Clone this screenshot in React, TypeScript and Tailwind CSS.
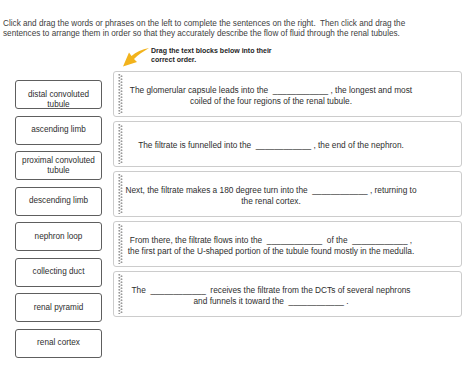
import React from "react";

const B = "____________";

function Handle() {
  return (
    <svg width="5" height="40" className="shrink-0" aria-hidden>
      <defs>
        <pattern id="hp" width="5" height="3" patternUnits="userSpaceOnUse">
          <circle cx="1.3" cy="0.8" r="0.95" fill="#9a9a9a" />
          <circle cx="3.5" cy="2.3" r="0.95" fill="#9a9a9a" />
        </pattern>
      </defs>
      <rect x="0" y="0" width="5" height="40" fill="url(#hp)" />
    </svg>
  );
}

function WordBox({ children, extra = "" }: { children: React.ReactNode; extra?: string }) {
  return (
    <div
      className={`h-[29px] w-[87px] border border-[#5e5e5e] rounded-[3px] flex items-center justify-center text-center text-[8.2px] leading-[9.5px] text-[#2e2e2e] ${extra}`}
    >
      <div>{children}</div>
    </div>
  );
}

function SentenceBox({ lines }: { lines: string[] }) {
  return (
    <div className="h-[46px] w-[349px] border border-[#cccccc] rounded-[3px] flex items-center pl-[4px] bg-white">
      <Handle />
      <div className="w-[292px] ml-[2px] pt-[3px] text-center text-[8.3px] leading-[10.5px] text-[#2e2e2e] whitespace-pre">
        {lines.map((l, i) => (
          <div key={i}>{l}</div>
        ))}
      </div>
    </div>
  );
}

export default function App() {
  return (
    <div
      className="w-[474px] h-[375px] bg-white overflow-hidden"
      style={{ fontFamily: '"Liberation Sans", Arial, sans-serif' }}
    >
      <div className="pt-[19px] pl-[3px] text-[8.2px] leading-[10px] text-[#404040]">
        <div className="whitespace-pre">Click and drag the words or phrases on the left to complete the sentences on the right.  Then click and drag the</div>
        <div className="whitespace-pre">sentences to arrange them in order so that they accurately describe the flow of fluid through the renal tubules.</div>
      </div>

      <div className="mt-[6px] h-[26px] flex items-start pl-[118px]">
        <svg width="33" height="26" viewBox="0 0 33 26" className="shrink-0" aria-hidden>
          <path
            d="M31 3 C 24 4.5, 18 7, 13.5 11 L 11 7.5 L 5 21.5 L 19 17 L 16 14 C 20 10, 25 6.5, 31 3 Z"
            fill="#f2b31c"
          />
        </svg>
        <div className="text-[7px] leading-[9px] font-bold text-[#1e1e1e] pt-[0.5px]">
          <div>Drag the text blocks below into their</div>
          <div>correct order.</div>
        </div>
      </div>

      <div className="flex items-start">
        <div className="ml-[15px] mt-[9px] flex flex-col gap-[6.5px]">
          <WordBox extra="pt-[10px]">
            distal convoluted
            <br />
            tubule
          </WordBox>
          <WordBox>ascending limb</WordBox>
          <WordBox>
            proximal convoluted
            <br />
            tubule
          </WordBox>
          <WordBox>descending limb</WordBox>
          <WordBox>nephron loop</WordBox>
          <WordBox>collecting duct</WordBox>
          <WordBox>renal pyramid</WordBox>
          <WordBox>renal cortex</WordBox>
        </div>

        <div className="ml-[11px] flex flex-col gap-[4px]">
          <SentenceBox
            lines={[
              `The glomerular capsule leads into the  ${B} , the longest and most`,
              "coiled of the four regions of the renal tubule.",
            ]}
          />
          <SentenceBox lines={[`The filtrate is funnelled into the  ${B} , the end of the nephron.`]} />
          <SentenceBox
            lines={[
              `Next, the filtrate makes a 180 degree turn into the  ${B} , returning to`,
              "the renal cortex.",
            ]}
          />
          <SentenceBox
            lines={[
              `From there, the filtrate flows into the  ${B}  of the  ${B} ,`,
              "the first part of the U-shaped portion of the tubule found mostly in the medulla.",
            ]}
          />
          <SentenceBox
            lines={[
              `The  ${B}  receives the filtrate from the DCTs of several nephrons`,
              `and funnels it toward the  ${B} .`,
            ]}
          />
        </div>
      </div>
    </div>
  );
}
